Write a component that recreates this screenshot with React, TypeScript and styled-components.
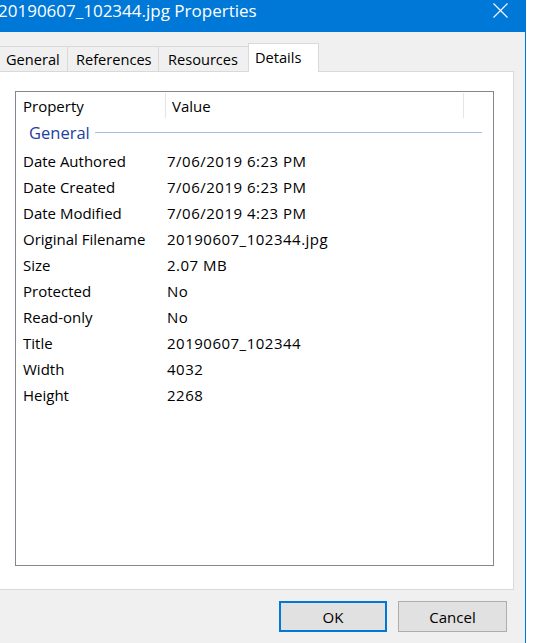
import React from 'react';
import styled, { createGlobalStyle } from 'styled-components';

const GlobalStyle = createGlobalStyle`
  html, body {
    margin: 0;
    padding: 0;
    background: #ffffff;
  }
  body {
    font-family: "Open Sans", "Noto Sans", "Liberation Sans", sans-serif;
    color: #000;
  }
`;

const Screen = styled.div`
  width: 533px;
  height: 643px;
  overflow: hidden;
  background: #ffffff;
`;

const Window = styled.div`
  width: 526px;
  height: 643px;
  box-sizing: border-box;
  border-right: 1px solid #0078d7;
  background: #f0f0f0;
  display: flex;
  flex-direction: column;
`;

const TitleBar = styled.div`
  height: 32px;
  flex: none;
  background: #0078d7;
  color: #ffffff;
  display: flex;
  align-items: flex-start;
  justify-content: space-between;
`;

const Title = styled.span`
  font-size: 17px;
  line-height: 22px;
  margin-left: -2px;
  white-space: nowrap;
`;

const CloseIcon = styled.svg`
  width: 15px;
  height: 15px;
  margin-top: 3px;
  margin-right: 17px;
`;

const TabStrip = styled.div`
  display: flex;
  align-items: flex-end;
  height: 28px;
  margin-top: 11px;
  margin-left: -2px;
  position: relative;
  z-index: 1;
`;

const Tab = styled.div<{ $active?: boolean; $w: number; $pad: number }>`
  box-sizing: border-box;
  flex: none;
  height: ${p => (p.$active ? 29 : 25)}px;
  width: ${p => p.$w}px;
  margin-left: -1px;
  margin-bottom: ${p => (p.$active ? -1 : 0)}px;
  border: 1px solid #d9d9d9;
  border-bottom: none;
  background: ${p => (p.$active ? '#ffffff' : '#f0f0f0')};
  font-size: 14.6px;
  line-height: ${p => (p.$active ? 26 : 24)}px;
  padding-left: ${p => p.$pad}px;
  white-space: nowrap;
  &:first-child {
    margin-left: 0;
  }
`;

const Panel = styled.div`
  box-sizing: border-box;
  width: 517px;
  height: 519px;
  margin-left: -3px;
  border: 1px solid #d9d9d9;
  background: #ffffff;
  padding: 19px 19px 23px 17px;
  display: flex;
`;

const ListBox = styled.div`
  flex: 1;
  border: 1px solid #828790;
  background: #ffffff;
  display: flex;
  flex-direction: column;
  font-size: 15px;
`;

const HeaderRow = styled.div`
  display: flex;
  height: 27px;
  padding-top: 1px;
  box-sizing: border-box;
`;

const HeaderCell = styled.div<{ $w: number; $pad: number }>`
  box-sizing: border-box;
  width: ${p => p.$w}px;
  flex: none;
  height: 25px;
  line-height: 26px;
  padding-left: ${p => p.$pad}px;
  border-right: 1px solid #e5e5e5;
`;

const GroupHeader = styled.div`
  display: flex;
  align-items: center;
  height: 24px;
  margin-top: 1px;
  padding-left: 13px;
  padding-right: 11px;
  color: #1e3f9e;
  font-size: 16.5px;
  gap: 5px;
`;

const GroupLine = styled.div`
  flex: 1;
  height: 1px;
  background: #a7bde3;
  margin-top: 1px;
`;

const Rows = styled.div`
  padding-top: 4px;
`;

const Row = styled.div`
  display: flex;
  height: 26px;
  line-height: 26px;
`;

const NameCell = styled.div`
  width: 152px;
  padding-left: 7px;
  box-sizing: border-box;
  white-space: nowrap;
`;

const ValueCell = styled.div`
  white-space: nowrap;
  letter-spacing: 0.5px;
  margin-left: -1px;
`;

const ButtonBar = styled.div`
  display: flex;
  justify-content: flex-end;
  gap: 11px;
  margin-top: 11px;
  padding-right: 18px;
`;

const DialogButton = styled.button<{ $default?: boolean }>`
  box-sizing: border-box;
  width: ${p => (p.$default ? 108 : 109)}px;
  height: 31px;
  background: #e1e1e1;
  border: ${p => (p.$default ? '2px solid #0078d7' : '1px solid #adadad')};
  font-family: inherit;
  font-size: 15px;
  color: #000;
  padding: 0;
  margin: 0;
`;

const rows: [string, string][] = [
  ['Date Authored', '7/06/2019 6:23 PM'],
  ['Date Created', '7/06/2019 6:23 PM'],
  ['Date Modified', '7/06/2019 4:23 PM'],
  ['Original Filename', '20190607_102344.jpg'],
  ['Size', '2.07 MB'],
  ['Protected', 'No'],
  ['Read-only', 'No'],
  ['Title', '20190607_102344'],
  ['Width', '4032'],
  ['Height', '2268'],
];

const tabs = [
  { label: 'General', w: 70, pad: 7 },
  { label: 'References', w: 92, pad: 8 },
  { label: 'Resources', w: 91, pad: 9 },
  { label: 'Details', w: 71, pad: 6, active: true },
];

const App: React.FC = () => {
  return (
    <Screen>
      <GlobalStyle />
      <Window>
        <TitleBar>
          <Title>20190607_102344.jpg Properties</Title>
          <CloseIcon viewBox="0 0 15 15">
            <path d="M0.5 0.5 L14.5 14.5 M14.5 0.5 L0.5 14.5" stroke="#ffffff" strokeWidth="1.1" fill="none" />
          </CloseIcon>
        </TitleBar>
        <TabStrip>
          {tabs.map(t => (
            <Tab key={t.label} $active={t.active} $w={t.w} $pad={t.pad}>
              {t.label}
            </Tab>
          ))}
        </TabStrip>
        <Panel>
          <ListBox>
            <HeaderRow>
              <HeaderCell $w={150} $pad={7}>Property</HeaderCell>
              <HeaderCell $w={298} $pad={6}>Value</HeaderCell>
            </HeaderRow>
            <GroupHeader>
              General
              <GroupLine />
            </GroupHeader>
            <Rows>
              {rows.map(([name, value]) => (
                <Row key={name}>
                  <NameCell>{name}</NameCell>
                  <ValueCell>{value}</ValueCell>
                </Row>
              ))}
            </Rows>
          </ListBox>
        </Panel>
        <ButtonBar>
          <DialogButton $default>OK</DialogButton>
          <DialogButton>Cancel</DialogButton>
        </ButtonBar>
      </Window>
    </Screen>
  );
};

export default App;
